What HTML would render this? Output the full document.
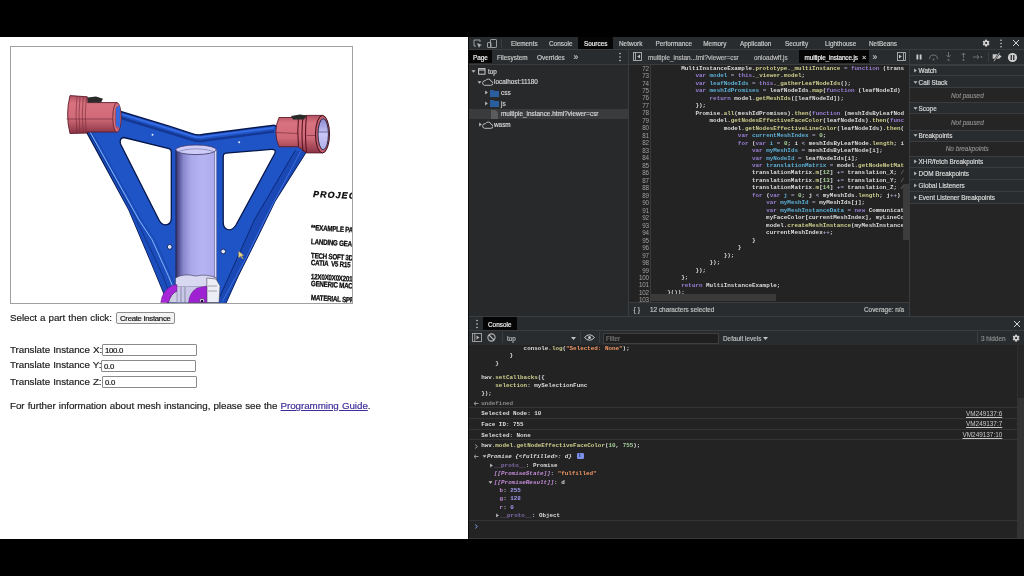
<!DOCTYPE html>
<html><head><meta charset="utf-8">
<style>
*{box-sizing:border-box;margin:0;padding:0}
html,body{width:1024px;height:576px;overflow:hidden;background:#000;font-family:"Liberation Sans",sans-serif}
.b{position:absolute}
.t{position:absolute;white-space:pre;line-height:1}
.d{-webkit-text-stroke:0.18px currentColor}
.m{position:absolute;white-space:pre;line-height:1;font-family:"Liberation Mono",monospace;font-weight:bold}
svg{position:absolute}
</style></head><body><div style="position:absolute;left:0;top:0;width:1024px;height:576px;will-change:transform;background:#000">
<div class="b" style="left:0;top:37px;width:468px;height:502px;background:#fff"></div><div class="b" style="left:10px;top:46px;width:343px;height:258px;border:1px solid #a0a0a0;background:#fff"></div><svg style="left:11px;top:47px" width="341" height="256" viewBox="11 47 341 256">
<defs>
<linearGradient id="cyl" x1="175.5" x2="214" y1="0" y2="0" gradientUnits="userSpaceOnUse">
<stop offset="0" stop-color="#22204a"/><stop offset="0.06" stop-color="#4a4888"/><stop offset="0.2" stop-color="#8886cc"/><stop offset="0.4" stop-color="#aaa8ea"/><stop offset="0.7" stop-color="#b6b4f2"/><stop offset="1" stop-color="#adabec"/>
</linearGradient>
<linearGradient id="red" x1="0" x2="0" y1="0" y2="1">
<stop offset="0" stop-color="#b45262"/><stop offset="0.2" stop-color="#d8727f"/><stop offset="0.6" stop-color="#d06a78"/><stop offset="1" stop-color="#8a3444"/>
</linearGradient>
<linearGradient id="lav" x1="0" x2="0" y1="0" y2="1">
<stop offset="0" stop-color="#8c8ad0"/><stop offset="0.5" stop-color="#c8c6f6"/><stop offset="1" stop-color="#b0aeea"/>
</linearGradient>
</defs>
<!-- frame outer -->
<path d="M86 131 L100 119 L116 110 L170 126.4 L192 133.6 Q198 135.8 204 134.2 L274 125.2 L292 132 L305.7 152.5 L275.5 200 L257 238 L238 276 L225.8 303 L168 303 L150.2 260 L129 210 Z" fill="#1f54c6" stroke="#08184e" stroke-width="1.4"/>
<!-- upper bar stripes -->
<path d="M116 116.5 L170 133 L191 139.5 Q198 142 205 140.5 L274 131.5" fill="none" stroke="#143894" stroke-width="2.4"/>
<path d="M116 112.6 L170 129 L192 136.1 Q198 138.1 204 136.7 L274 127.7" fill="none" stroke="#3a6ee6" stroke-width="1.6"/>
<!-- left arm band -->
<path d="M87 131 L129 210 L150.2 260 L168 303 L178 303 L168.6 276.5 L152.2 240 L139 220 L89.5 131 Z" fill="#1b4dbd"/>
<path d="M88.2 131 L134 215 L151 250 L163 276 L173 303" fill="none" stroke="#103082" stroke-width="0.8"/>
<path d="M89.5 131 L139 220 L152.2 240 L168.6 276.5 L177 297" fill="none" stroke="#8ec0ff" stroke-width="0.9"/>
<path d="M92 131.5 L141 219 L154.5 239 L171 276 L176 288" fill="none" stroke="#163e9e" stroke-width="0.7"/>
<!-- right arm band -->
<path d="M305.7 152.5 L275.5 200 L257 238 L238 276 L225.8 303 L217 303 L254.3 220 L295.3 150.4 Z" fill="#1a48b4"/>
<path d="M300.5 151.5 L264.5 220 L246 258 L221.5 303" fill="none" stroke="#4c7ef0" stroke-width="0.7"/>
<path d="M295.3 150.4 L254.3 220 L217 303" fill="none" stroke="#0e2a7a" stroke-width="1"/>
<!-- holes -->
<path d="M124 137.5 L169 148.7 Q171.3 149.3 171.3 152 L171.3 218 Q171.3 224.8 165.3 224.8 Q161.5 224.8 159 220 L120.5 144 Q119 138 124 137.5 Z" fill="#fff" stroke="#07164a" stroke-width="1.3"/>
<path d="M226 153.2 L271 149.4 Q277 149 274.5 154 L236 225 Q232 231 227.5 229.5 Q223.2 228 223.2 222 L223.2 157 Q223.2 153.5 226 153.2 Z" fill="#fff" stroke="#07164a" stroke-width="1.3"/>
<!-- central cylinder -->
<rect x="175.5" y="150" width="38.8" height="128" fill="url(#cyl)"/>
<rect x="214.3" y="150" width="2.4" height="128" fill="#dcdcf8" stroke="#40406a" stroke-width="0.4"/>
<ellipse cx="196" cy="149.8" rx="20.2" ry="4.8" fill="#cfcdf8" stroke="#3a3868" stroke-width="0.8"/>
<path d="M178 151.5 Q196 146 214 151.5" fill="none" stroke="#6e6ca0" stroke-width="0.6"/>
<!-- bottom fittings -->
<path d="M175.5 278 Q183 273 196 276 Q207 273.5 216.7 278 L216.7 287 L175.5 287 Z" fill="#d9d8f2" stroke="#3a3a5a" stroke-width="0.6"/>
<path d="M176.5 287 L206.8 287 L206.8 302.6 L176.5 302.6 Z" fill="#c9c8e8"/>
<path d="M181 287 L181 302.6 M185 287 L185 302.6" stroke="#4a4a6a" stroke-width="0.5"/>
<path d="M206.8 278 L216 279 L220 286 L219 302.6 L206.8 302.6 Z" fill="#ededf5" stroke="#4a4a60" stroke-width="0.6"/>
<path d="M208 286 L217 286 M208 291 L217 291" stroke="#5a5a70" stroke-width="0.5"/>
<path d="M168.5 302.6 Q170.5 294 177 291 L177 302.6 Z" fill="#cfcfe4" stroke="#4a4a6a" stroke-width="0.4"/>
<path d="M160.7 302.6 Q162 291 172 285.5 L177 284.5 L177 291 Q170.5 294 168.5 302.6 Z" fill="#a626d8" stroke="#4a1060" stroke-width="0.4"/>
<path d="M188.6 302.6 Q189 293 197 288 L206.8 286 L206.8 302.6 Z" fill="#9f22d2" stroke="#4a1060" stroke-width="0.4"/>
<ellipse cx="202" cy="300.5" rx="2.6" ry="2.2" fill="#e6d6f6" stroke="#300848" stroke-width=".6"/>
<circle cx="202" cy="301" r="1.2" fill="#200030"/>
<!-- small holes dots -->
<circle cx="152.5" cy="134.7" r="1" fill="#e8eeff"/>
<circle cx="239.2" cy="142.2" r="1" fill="#e8eeff"/>
<circle cx="169.7" cy="246.9" r="2.4" fill="#dfe4fa" stroke="#0c1f58" stroke-width=".9"/>
<circle cx="223.2" cy="251.5" r="2.4" fill="#dfe4fa" stroke="#0c1f58" stroke-width=".9"/>
<!-- left cylinder -->
<path d="M70 95.6 L87.3 96.8 L87.3 102.6 L117 102.6 L117 132 L87.3 132 L87.3 133 L70 133.5 Q65.2 114.5 70 95.6 Z" fill="url(#red)" stroke="#5e1a2a" stroke-width="0.9"/>
<ellipse cx="117" cy="117.4" rx="4.2" ry="14.8" fill="#d27282" stroke="#5e1a2a" stroke-width="0.8"/>
<ellipse cx="117.6" cy="117.4" rx="2.4" ry="11.5" fill="#c45a6a" stroke="#7a2a3a" stroke-width="0.5"/>
<path d="M116 108 L120 105 L120 128 L116 126 Z" fill="#3468dc"/>
<path d="M77 96 Q75 114.5 77 133.2 M80 96.2 Q78 114.5 80 133.3 M83.3 96.4 Q81.3 114.5 83.3 133.4 M86.3 96.7 Q84.3 114.5 86.3 133.4" fill="none" stroke="#6a2232" stroke-width="0.55"/>
<path d="M66.5 119 L113 119" stroke="#6a2232" stroke-width="0.6"/>
<path d="M87.5 97.6 L96 96.6 L103 98.8 L101 102.6 L88 102.6 Z" fill="#2a2a2a"/>
<!-- right cylinder -->
<path d="M279 117.5 L298.3 117.5 L306.7 115.4 L322.5 115.4 L322.5 152.9 L306.7 152.9 L298.3 146.7 L279 146.7 Q272.6 132 279 117.5 Z" fill="url(#red)" stroke="#5e1a2a" stroke-width="0.9"/>
<path d="M298.5 118 Q297 132 298.5 146.5 M303 116.5 Q301 134 303 151.5 M306.5 115.8 Q304.5 134 306.5 152.5" fill="none" stroke="#5a1424" stroke-width="1.1"/>
<path d="M275 132.5 L298 133.5 M306.7 135.5 L318 135.5" stroke="#6a2232" stroke-width="0.6"/>
<ellipse cx="322.5" cy="134.2" rx="7" ry="18.8" fill="#c85f6f" stroke="#3a0c18" stroke-width="1"/>
<ellipse cx="323.2" cy="134.2" rx="5.2" ry="15.6" fill="url(#lav)" stroke="#20203a" stroke-width="0.9"/>
<path d="M318.5 132 L327.5 132" stroke="#3a3a70" stroke-width="0.6"/>
<path d="M291 116 L300 114.5 L306.7 115.6 L304 119.6 L293 119.6 Z" fill="#2a2a2a"/>
<!-- cursor -->
<path d="M238.5 251 L238.5 258 L240.5 256.5 L242.5 259 L243.5 258.5 L241.5 256 L244 255.5 Z" fill="#e8d080" stroke="#555" stroke-width=".3"/>
</svg><div class="b" style="left:300px;top:180px;width:52.3px;height:122.6px;overflow:hidden"><div class="t" style="left:13px;top:10.2px;font-size:8.8px;font-weight:bold;font-style:italic;letter-spacing:1.2px;color:#0a0a0a;-webkit-text-stroke:0.3px #000;transform:rotate(2.5deg);transform-origin:0 50%">PROJEC</div><div class="t" style="left:11px;top:44.29999999999998px;font-size:7.6px;font-weight:bold;letter-spacing:-0.3px;color:#0a0a0a;-webkit-text-stroke:0.25px #000;transform:rotate(3.5deg) scaleX(0.82);transform-origin:0 50%">**EXAMPLE PART</div><div class="t" style="left:11px;top:58.29999999999998px;font-size:7.6px;font-weight:bold;letter-spacing:-0.3px;color:#0a0a0a;-webkit-text-stroke:0.25px #000;transform:rotate(3.5deg) scaleX(0.82);transform-origin:0 50%">LANDING GEAR</div><div class="t" style="left:11px;top:72.0px;font-size:7.6px;font-weight:bold;letter-spacing:-0.3px;color:#0a0a0a;-webkit-text-stroke:0.25px #000;transform:rotate(3.5deg) scaleX(0.82);transform-origin:0 50%">TECH SOFT 3D</div><div class="t" style="left:11px;top:79.19999999999999px;font-size:7.6px;font-weight:bold;letter-spacing:-0.3px;color:#0a0a0a;-webkit-text-stroke:0.25px #000;transform:rotate(3.5deg) scaleX(0.82);transform-origin:0 50%">CATIA  V5 R15</div><div class="t" style="left:11px;top:93.0px;font-size:7.6px;font-weight:bold;letter-spacing:-0.3px;color:#0a0a0a;-webkit-text-stroke:0.25px #000;transform:rotate(3.5deg) scaleX(0.82);transform-origin:0 50%">12X0X0X0X2015</div><div class="t" style="left:11px;top:100.39999999999998px;font-size:7.6px;font-weight:bold;letter-spacing:-0.3px;color:#0a0a0a;-webkit-text-stroke:0.25px #000;transform:rotate(3.5deg) scaleX(0.82);transform-origin:0 50%">GENERIC MACHINE</div><div class="t" style="left:11px;top:113.89999999999998px;font-size:7.6px;font-weight:bold;letter-spacing:-0.3px;color:#0a0a0a;-webkit-text-stroke:0.25px #000;transform:rotate(3.5deg) scaleX(0.82);transform-origin:0 50%">MATERIAL SPF</div></div><div class="t d" style="left:10px;top:313px;font-size:9.8px;color:#202020;letter-spacing:-0.05px;word-spacing:0.45px">Select a part then click:</div><div class="b" style="left:116px;top:312px;width:59px;height:12px;border:1px solid #8d8d8d;border-radius:2px;background:#f3f3f3"></div><div class="t d" style="left:120px;top:314.5px;font-size:7.8px;color:#111;letter-spacing:-0.3px">Create Instance</div><div class="t d" style="left:10px;top:345px;font-size:9.8px;color:#202020;letter-spacing:-0.05px;word-spacing:0.45px">Translate Instance X:</div><div class="t d" style="left:10px;top:360px;font-size:9.8px;color:#202020;letter-spacing:-0.05px;word-spacing:0.45px">Translate Instance Y:</div><div class="t d" style="left:10px;top:376.7px;font-size:9.8px;color:#202020;letter-spacing:-0.05px;word-spacing:0.45px">Translate Instance Z:</div><div class="b" style="left:102px;top:344px;width:95px;height:12px;border:1px solid #8a8a8a;border-radius:1px;background:#fff"></div><div class="t d" style="left:105px;top:346.5px;font-size:7.8px;color:#111;letter-spacing:-0.3px">100.0</div><div class="b" style="left:101px;top:360.2px;width:95px;height:12px;border:1px solid #8a8a8a;border-radius:1px;background:#fff"></div><div class="t d" style="left:104px;top:362.7px;font-size:7.8px;color:#111;letter-spacing:-0.3px">0.0</div><div class="b" style="left:102px;top:376px;width:95px;height:12px;border:1px solid #8a8a8a;border-radius:1px;background:#fff"></div><div class="t d" style="left:105px;top:378.5px;font-size:7.8px;color:#111;letter-spacing:-0.3px">0.0</div><div class="t d" style="left:10px;top:401px;font-size:9.8px;color:#202020;letter-spacing:-0.05px;word-spacing:0.45px">For further information about mesh instancing, please see the <span style="color:#3d2f98;text-decoration:underline">Programming Guide</span>.</div><div class="b" style="left:468px;top:37px;width:556px;height:502px;background:#27292b;"></div><div class="b" style="left:468px;top:37px;width:556px;height:12px;background:#292c2e;"></div><div class="b" style="left:468px;top:49px;width:556px;height:1px;background:#3b3c3e;"></div><svg style="left:473px;top:39px" width="10" height="9" viewBox="0 0 10 9"><path d="M1 1h6v2M1 1v6h2" fill="none" stroke="#a9a9a9" stroke-width="0.9"/><path d="M4 4l5 2-2 .8L6 9z" fill="#b5b5b5"/></svg><svg style="left:487px;top:39px" width="10" height="9" viewBox="0 0 10 9"><rect x="3.5" y="0.5" width="6" height="8" rx=".6" fill="none" stroke="#a9a9a9" stroke-width="0.9"/><rect x="0.5" y="3.5" width="3.5" height="5" rx=".5" fill="none" stroke="#a9a9a9" stroke-width="0.9"/></svg><div class="b" style="left:501px;top:39px;width:1px;height:9px;background:#3b3c3e;"></div><div class="b" style="left:578px;top:37px;width:35px;height:12px;background:#050505;"></div><div class="t d" style="left:511px;top:40.7px;font-size:6.4px;color:#c8c8c8;">Elements</div><div class="t d" style="left:549px;top:40.7px;font-size:6.4px;color:#c8c8c8;">Console</div><div class="t d" style="left:584px;top:40.7px;font-size:6.4px;color:#f0f0f0;">Sources</div><div class="t d" style="left:619px;top:40.7px;font-size:6.4px;color:#c8c8c8;">Network</div><div class="t d" style="left:655.5px;top:40.7px;font-size:6.4px;color:#c8c8c8;">Performance</div><div class="t d" style="left:703.3px;top:40.7px;font-size:6.4px;color:#c8c8c8;">Memory</div><div class="t d" style="left:740px;top:40.7px;font-size:6.4px;color:#c8c8c8;">Application</div><div class="t d" style="left:785px;top:40.7px;font-size:6.4px;color:#c8c8c8;">Security</div><div class="t d" style="left:825px;top:40.7px;font-size:6.4px;color:#c8c8c8;">Lighthouse</div><div class="t d" style="left:869px;top:40.7px;font-size:6.4px;color:#c8c8c8;">NetBeans</div><svg style="left:982px;top:38.8px" width="8.2" height="8.2" viewBox="0 0 10 10"><circle cx="5.00" cy="1.90" r="1.35" fill="#cfcfcf"/><circle cx="7.68" cy="3.45" r="1.35" fill="#cfcfcf"/><circle cx="7.68" cy="6.55" r="1.35" fill="#cfcfcf"/><circle cx="5.00" cy="8.10" r="1.35" fill="#cfcfcf"/><circle cx="2.32" cy="6.55" r="1.35" fill="#cfcfcf"/><circle cx="2.32" cy="3.45" r="1.35" fill="#cfcfcf"/><circle cx="5" cy="5" r="3.1" fill="#cfcfcf"/><circle cx="5" cy="5" r="1.2" fill="#111"/></svg><svg style="left:999px;top:39px" width="4" height="9" viewBox="0 0 4 9"><circle cx="2" cy="1.3" r=".8" fill="#cfcfcf"/><circle cx="2" cy="4.5" r=".8" fill="#cfcfcf"/><circle cx="2" cy="7.7" r=".8" fill="#cfcfcf"/></svg><svg style="left:1012px;top:39px" width="8" height="8" viewBox="0 0 8 8"><path d="M1 1L7 7M7 1L1 7" stroke="#d5d5d5" stroke-width="1"/></svg><div class="b" style="left:468px;top:50px;width:556px;height:14px;background:#292c2e;"></div><div class="b" style="left:468px;top:64px;width:556px;height:1px;background:#3b3c3e;"></div><div class="b" style="left:469px;top:50px;width:23px;height:13px;background:#050505;"></div><div class="t d" style="left:473px;top:55px;font-size:6.4px;color:#f0f0f0;">Page</div><div class="t d" style="left:497px;top:55px;font-size:6.4px;color:#c8c8c8;">Filesystem</div><div class="t d" style="left:537px;top:55px;font-size:6.4px;color:#c8c8c8;">Overrides</div><div class="t d" style="left:573.5px;top:53px;font-size:8.5px;color:#c8c8c8;">»</div><svg style="left:618px;top:52px" width="4" height="10" viewBox="0 0 4 10"><circle cx="2" cy="1.5" r=".8" fill="#cfcfcf"/><circle cx="2" cy="5" r=".8" fill="#cfcfcf"/><circle cx="2" cy="8.5" r=".8" fill="#cfcfcf"/></svg><div class="b" style="left:628px;top:50px;width:1px;height:266px;background:#3b3c3e;"></div><svg style="left:633px;top:52px" width="9" height="9" viewBox="0 0 9 9"><rect x=".5" y=".5" width="8" height="8" fill="none" stroke="#b0b0b0" stroke-width=".9"/><path d="M2.5 1v7" stroke="#b0b0b0" stroke-width=".9"/><path d="M7 2.5L4.2 4.5 7 6.5z" fill="#c0c0c0"/></svg><div class="t d" style="left:648px;top:55px;font-size:6.4px;color:#bdbdbd;">multiple_instan...tml?viewer=csr</div><div class="t d" style="left:754px;top:55px;font-size:6.4px;color:#bdbdbd;">onloadwff.js</div><div class="b" style="left:799px;top:50px;width:70px;height:13px;background:#050505;"></div><div class="t d" style="left:804.5px;top:55px;font-size:6.4px;color:#f2f2f2;letter-spacing:-0.12px">multiple_instance.js</div><div class="t d" style="left:862px;top:54px;font-size:7.5px;color:#cfcfcf;">×</div><div class="t d" style="left:872.5px;top:53px;font-size:8.5px;color:#c8c8c8;">»</div><svg style="left:897px;top:52px" width="9" height="9" viewBox="0 0 9 9"><rect x=".5" y=".5" width="8" height="8" fill="none" stroke="#b0b0b0" stroke-width=".9"/><path d="M6.5 1v7" stroke="#b0b0b0" stroke-width=".9"/><path d="M2 2.5L4.8 4.5 2 6.5z" fill="#c0c0c0"/></svg><div class="b" style="left:909px;top:50px;width:1px;height:266px;background:#3b3c3e;"></div><div class="b" style="left:468px;top:108.5px;width:160px;height:10.5px;background:#3a3b3d;"></div><svg style="left:470.5px;top:69px" width="5" height="5" viewBox="0 0 5 5"><path d="M.5 1.2h4L2.5 3.8z" fill="#bdbdbd"/></svg><svg style="left:477.8px;top:68px" width="8" height="7" viewBox="0 0 8 7"><rect x=".6" y=".6" width="6.4" height="5.6" fill="none" stroke="#c8c8c8" stroke-width="1"/><path d="M.6 2h6.4" stroke="#c8c8c8" stroke-width="1.1"/></svg><div class="t d" style="left:488px;top:68.8px;font-size:6.4px;color:#d5d5d5;">top</div><svg style="left:476.5px;top:79.5px" width="5" height="5" viewBox="0 0 5 5"><path d="M.5 1.2h4L2.5 3.8z" fill="#bdbdbd"/></svg><svg style="left:482px;top:77.5px" width="11" height="8" viewBox="0 0 11 8"><path d="M2.5 7.3h6.3a2 2 0 0 0 .3-4 3 3 0 0 0-5.6-.6A2.3 2.3 0 0 0 2.5 7.3z" fill="none" stroke="#c8c8c8" stroke-width=".9"/></svg><div class="t d" style="left:494px;top:79px;font-size:6.4px;color:#d5d5d5;">localhost:11180</div><svg style="left:483.5px;top:90px" width="5" height="5" viewBox="0 0 5 5"><path d="M1.2 .5v4L3.8 2.5z" fill="#bdbdbd"/></svg><svg style="left:490px;top:88.5px" width="9" height="8" viewBox="0 0 9 8"><path d="M0 1h3.5l1 1H9v6H0z" fill="#2a5e9e"/></svg><div class="t d" style="left:501px;top:90px;font-size:6.4px;color:#d5d5d5;">css</div><svg style="left:483.5px;top:100.5px" width="5" height="5" viewBox="0 0 5 5"><path d="M1.2 .5v4L3.8 2.5z" fill="#bdbdbd"/></svg><svg style="left:490px;top:99px" width="9" height="8" viewBox="0 0 9 8"><path d="M0 1h3.5l1 1H9v6H0z" fill="#2a5e9e"/></svg><div class="t d" style="left:501px;top:100.8px;font-size:6.4px;color:#d5d5d5;">js</div><svg style="left:491px;top:109.5px" width="7" height="9" viewBox="0 0 7 9"><path d="M0 0h4.5L7 2.5V9H0z" fill="#5b5b5b"/></svg><div class="t d" style="left:501px;top:111.3px;font-size:6.4px;color:#d5d5d5;">multiple_instance.html?viewer=csr</div><svg style="left:477.5px;top:122px" width="5" height="5" viewBox="0 0 5 5"><path d="M1.2 .5v4L3.8 2.5z" fill="#bdbdbd"/></svg><svg style="left:482px;top:120.5px" width="11" height="8" viewBox="0 0 11 8"><path d="M2.5 7.3h6.3a2 2 0 0 0 .3-4 3 3 0 0 0-5.6-.6A2.3 2.3 0 0 0 2.5 7.3z" fill="none" stroke="#c8c8c8" stroke-width=".9"/></svg><div class="t d" style="left:494px;top:122px;font-size:6.4px;color:#d5d5d5;">wasm</div><div class="b" style="left:629px;top:65px;width:280px;height:238px;background:#232323;"></div><div class="b" style="left:650px;top:65px;width:1px;height:238px;background:#3a3a3a;"></div><div class="b" style="left:651px;top:64px;width:252.5px;height:236px;overflow:hidden"><div class="m" style="left:2px;top:1.75px;font-size:5.900px;color:#dcdcdc">        MultiInstanceExample.<span style="color:#cfcf8e">prototype</span>.<span style="color:#cfcf8e">_multiInstance</span> <span style="color:#a8a2c8">=</span> <span style="color:#9a7fd5">function</span> (translation_X, translation_Y, translation_Z) {</div><div class="m" style="left:2px;top:9.23px;font-size:5.900px;color:#dcdcdc">            <span style="color:#9a7fd5">var</span> <span style="color:#5db0d7">model</span> <span style="color:#a8a2c8">=</span> <span style="color:#9a7fd5">this</span>.<span style="color:#cfcf8e">_viewer</span>.<span style="color:#cfcf8e">model</span>;</div><div class="m" style="left:2px;top:16.71px;font-size:5.900px;color:#dcdcdc">            <span style="color:#9a7fd5">var</span> <span style="color:#5db0d7">leafNodeIds</span> <span style="color:#a8a2c8">=</span> <span style="color:#9a7fd5">this</span>.<span style="color:#cfcf8e">_gatherLeafNodeIds</span>();</div><div class="m" style="left:2px;top:24.19px;font-size:5.900px;color:#dcdcdc">            <span style="color:#9a7fd5">var</span> <span style="color:#5db0d7">meshIdPromises</span> <span style="color:#a8a2c8">=</span> leafNodeIds.<span style="color:#cfcf8e">map</span>(<span style="color:#9a7fd5">function</span> (leafNodeId) {</div><div class="m" style="left:2px;top:31.67px;font-size:5.900px;color:#dcdcdc">                <span style="color:#9a7fd5">return</span> model.<span style="color:#cfcf8e">getMeshIds</span>([leafNodeId]);</div><div class="m" style="left:2px;top:39.15px;font-size:5.900px;color:#dcdcdc">            });</div><div class="m" style="left:2px;top:46.63px;font-size:5.900px;color:#dcdcdc">            Promise.<span style="color:#cfcf8e">all</span>(meshIdPromises).<span style="color:#cfcf8e">then</span>(<span style="color:#9a7fd5">function</span> (meshIdsByLeafNode) {</div><div class="m" style="left:2px;top:54.11px;font-size:5.900px;color:#dcdcdc">                model.<span style="color:#cfcf8e">getNodesEffectiveFaceColor</span>(leafNodeIds).<span style="color:#cfcf8e">then</span>(<span style="color:#9a7fd5">function</span> (myFaceColor) {</div><div class="m" style="left:2px;top:61.59px;font-size:5.900px;color:#dcdcdc">                    model.<span style="color:#cfcf8e">getNodesEffectiveLineColor</span>(leafNodeIds).<span style="color:#cfcf8e">then</span>(<span style="color:#9a7fd5">function</span> (myLineColor) {</div><div class="m" style="left:2px;top:69.07px;font-size:5.900px;color:#dcdcdc">                        <span style="color:#9a7fd5">var</span> <span style="color:#5db0d7">currentMeshIndex</span> <span style="color:#a8a2c8">=</span> <span style="color:#a9d39b">0</span>;</div><div class="m" style="left:2px;top:76.55px;font-size:5.900px;color:#dcdcdc">                        <span style="color:#9a7fd5">for</span> (<span style="color:#9a7fd5">var</span> <span style="color:#5db0d7">i</span> <span style="color:#a8a2c8">=</span> <span style="color:#a9d39b">0</span>; i <span style="color:#a8a2c8">&lt;</span> meshIdsByLeafNode.<span style="color:#cfcf8e">length</span>; i<span style="color:#a8a2c8">++</span>) {</div><div class="m" style="left:2px;top:84.03px;font-size:5.900px;color:#dcdcdc">                            <span style="color:#9a7fd5">var</span> <span style="color:#5db0d7">myMeshIds</span> <span style="color:#a8a2c8">=</span> meshIdsByLeafNode[i];</div><div class="m" style="left:2px;top:91.51px;font-size:5.900px;color:#dcdcdc">                            <span style="color:#9a7fd5">var</span> <span style="color:#5db0d7">myNodeId</span> <span style="color:#a8a2c8">=</span> leafNodeIds[i];</div><div class="m" style="left:2px;top:98.99px;font-size:5.900px;color:#dcdcdc">                            <span style="color:#9a7fd5">var</span> <span style="color:#5db0d7">translationMatrix</span> <span style="color:#a8a2c8">=</span> model.<span style="color:#cfcf8e">getNodeNetMatrix</span>(myNodeId);</div><div class="m" style="left:2px;top:106.47px;font-size:5.900px;color:#dcdcdc">                            translationMatrix.<span style="color:#cfcf8e">m</span>[<span style="color:#a9d39b">12</span>] <span style="color:#a8a2c8">+=</span> translation_X; <span style="color:#777">/</span><span style="color:#777">/</span></div><div class="m" style="left:2px;top:113.95px;font-size:5.900px;color:#dcdcdc">                            translationMatrix.<span style="color:#cfcf8e">m</span>[<span style="color:#a9d39b">13</span>] <span style="color:#a8a2c8">+=</span> translation_Y; <span style="color:#777">/</span><span style="color:#777">/</span></div><div class="m" style="left:2px;top:121.43px;font-size:5.900px;color:#dcdcdc">                            translationMatrix.<span style="color:#cfcf8e">m</span>[<span style="color:#a9d39b">14</span>] <span style="color:#a8a2c8">+=</span> translation_Z; <span style="color:#777">/</span><span style="color:#777">/</span></div><div class="m" style="left:2px;top:128.91px;font-size:5.900px;color:#dcdcdc">                            <span style="color:#9a7fd5">for</span> (<span style="color:#9a7fd5">var</span> <span style="color:#5db0d7">j</span> <span style="color:#a8a2c8">=</span> <span style="color:#a9d39b">0</span>; j <span style="color:#a8a2c8">&lt;</span> myMeshIds.<span style="color:#cfcf8e">length</span>; j<span style="color:#a8a2c8">++</span>) {</div><div class="m" style="left:2px;top:136.39px;font-size:5.900px;color:#dcdcdc">                                <span style="color:#9a7fd5">var</span> <span style="color:#5db0d7">myMeshId</span> <span style="color:#a8a2c8">=</span> myMeshIds[j];</div><div class="m" style="left:2px;top:143.87px;font-size:5.900px;color:#dcdcdc">                                <span style="color:#9a7fd5">var</span> <span style="color:#5db0d7">myMeshInstanceData</span> <span style="color:#a8a2c8">=</span> <span style="color:#9a7fd5">new</span> Communicator.<span style="color:#cfcf8e">MeshInstanceData</span>(myMeshId,</div><div class="m" style="left:2px;top:151.35px;font-size:5.900px;color:#dcdcdc">                                myFaceColor[currentMeshIndex], myLineColor[currentMeshIndex]);</div><div class="m" style="left:2px;top:158.83px;font-size:5.900px;color:#dcdcdc">                                model.<span style="color:#cfcf8e">createMeshInstance</span>(myMeshInstanceData, null, null, true);</div><div class="m" style="left:2px;top:166.31px;font-size:5.900px;color:#dcdcdc">                                currentMeshIndex<span style="color:#a8a2c8">++</span>;</div><div class="m" style="left:2px;top:173.79px;font-size:5.900px;color:#dcdcdc">                            }</div><div class="m" style="left:2px;top:181.27px;font-size:5.900px;color:#dcdcdc">                        }</div><div class="m" style="left:2px;top:188.75px;font-size:5.900px;color:#dcdcdc">                    });</div><div class="m" style="left:2px;top:196.23px;font-size:5.900px;color:#dcdcdc">                });</div><div class="m" style="left:2px;top:203.71px;font-size:5.900px;color:#dcdcdc">            });</div><div class="m" style="left:2px;top:211.19px;font-size:5.900px;color:#dcdcdc">        };</div><div class="m" style="left:2px;top:218.67px;font-size:5.900px;color:#dcdcdc">        <span style="color:#9a7fd5">return</span> MultiInstanceExample;</div><div class="m" style="left:2px;top:226.15px;font-size:5.900px;color:#dcdcdc">    }());</div><div class="m" style="left:2px;top:233.63px;font-size:5.900px;color:#dcdcdc"></div></div><div class="t" style="left:642.30px;top:65.55px;font-size:6.3px;color:#a0a0a0;letter-spacing:-0.3px">72</div><div class="t" style="left:642.30px;top:73.03px;font-size:6.3px;color:#a0a0a0;letter-spacing:-0.3px">73</div><div class="t" style="left:642.30px;top:80.51px;font-size:6.3px;color:#a0a0a0;letter-spacing:-0.3px">74</div><div class="t" style="left:642.30px;top:87.99px;font-size:6.3px;color:#a0a0a0;letter-spacing:-0.3px">75</div><div class="t" style="left:642.30px;top:95.47px;font-size:6.3px;color:#a0a0a0;letter-spacing:-0.3px">76</div><div class="t" style="left:642.30px;top:102.95px;font-size:6.3px;color:#a0a0a0;letter-spacing:-0.3px">77</div><div class="t" style="left:642.30px;top:110.43px;font-size:6.3px;color:#a0a0a0;letter-spacing:-0.3px">78</div><div class="t" style="left:642.30px;top:117.91px;font-size:6.3px;color:#a0a0a0;letter-spacing:-0.3px">79</div><div class="t" style="left:642.30px;top:125.39px;font-size:6.3px;color:#a0a0a0;letter-spacing:-0.3px">80</div><div class="t" style="left:642.30px;top:132.87px;font-size:6.3px;color:#a0a0a0;letter-spacing:-0.3px">81</div><div class="t" style="left:642.30px;top:140.35px;font-size:6.3px;color:#a0a0a0;letter-spacing:-0.3px">82</div><div class="t" style="left:642.30px;top:147.83px;font-size:6.3px;color:#a0a0a0;letter-spacing:-0.3px">83</div><div class="t" style="left:642.30px;top:155.31px;font-size:6.3px;color:#a0a0a0;letter-spacing:-0.3px">84</div><div class="t" style="left:642.30px;top:162.79px;font-size:6.3px;color:#a0a0a0;letter-spacing:-0.3px">85</div><div class="t" style="left:642.30px;top:170.27px;font-size:6.3px;color:#a0a0a0;letter-spacing:-0.3px">86</div><div class="t" style="left:642.30px;top:177.75px;font-size:6.3px;color:#a0a0a0;letter-spacing:-0.3px">87</div><div class="t" style="left:642.30px;top:185.23px;font-size:6.3px;color:#a0a0a0;letter-spacing:-0.3px">88</div><div class="t" style="left:642.30px;top:192.71px;font-size:6.3px;color:#a0a0a0;letter-spacing:-0.3px">89</div><div class="t" style="left:642.30px;top:200.19px;font-size:6.3px;color:#a0a0a0;letter-spacing:-0.3px">90</div><div class="t" style="left:642.30px;top:207.67px;font-size:6.3px;color:#a0a0a0;letter-spacing:-0.3px">91</div><div class="t" style="left:642.30px;top:215.15px;font-size:6.3px;color:#a0a0a0;letter-spacing:-0.3px">92</div><div class="t" style="left:642.30px;top:222.63px;font-size:6.3px;color:#a0a0a0;letter-spacing:-0.3px">93</div><div class="t" style="left:642.30px;top:230.11px;font-size:6.3px;color:#a0a0a0;letter-spacing:-0.3px">94</div><div class="t" style="left:642.30px;top:237.59px;font-size:6.3px;color:#a0a0a0;letter-spacing:-0.3px">95</div><div class="t" style="left:642.30px;top:245.07px;font-size:6.3px;color:#a0a0a0;letter-spacing:-0.3px">96</div><div class="t" style="left:642.30px;top:252.55px;font-size:6.3px;color:#a0a0a0;letter-spacing:-0.3px">97</div><div class="t" style="left:642.30px;top:260.03px;font-size:6.3px;color:#a0a0a0;letter-spacing:-0.3px">98</div><div class="t" style="left:642.30px;top:267.51px;font-size:6.3px;color:#a0a0a0;letter-spacing:-0.3px">99</div><div class="t" style="left:639.05px;top:274.99px;font-size:6.3px;color:#a0a0a0;letter-spacing:-0.3px">100</div><div class="t" style="left:639.05px;top:282.47px;font-size:6.3px;color:#a0a0a0;letter-spacing:-0.3px">101</div><div class="t" style="left:639.05px;top:289.95px;font-size:6.3px;color:#a0a0a0;letter-spacing:-0.3px">102</div><div class="t" style="left:639.05px;top:297.43px;font-size:6.3px;color:#a0a0a0;letter-spacing:-0.3px">103</div><div class="b" style="left:903px;top:184px;width:6px;height:56px;background:#3c3c3c;"></div><div class="b" style="left:651px;top:294px;width:125px;height:7.2px;background:#3a3a3a;"></div><div class="b" style="left:629px;top:302px;width:280px;height:1px;background:#3b3c3e;"></div><div class="b" style="left:629px;top:303px;width:280px;height:13px;background:#292c2e;"></div><div class="t d" style="left:633.5px;top:306.3px;font-size:7px;color:#bdbdbd;">{ }</div><div class="t d" style="left:650px;top:307.2px;font-size:6.4px;color:#c0c0c0;">12 characters selected</div><div class="t d" style="left:864px;top:307.2px;font-size:6.4px;color:#c0c0c0;">Coverage: n/a</div><div class="b" style="left:910px;top:65px;width:114px;height:251px;background:#252526;"></div><svg style="left:915px;top:53px" width="8" height="8" viewBox="0 0 8 8"><rect x="1.5" y="1.5" width="1.8" height="5" fill="#d0d0d0"/><rect x="4.7" y="1.5" width="1.8" height="5" fill="#d0d0d0"/></svg><svg style="left:928px;top:53px" width="11" height="8" viewBox="0 0 11 8"><path d="M1.5 6A4 4 0 0 1 9.5 6" fill="none" stroke="#6e6e6e" stroke-width="1.1"/><circle cx="5.5" cy="6.6" r="1" fill="#6e6e6e"/></svg><svg style="left:945px;top:52px" width="7" height="10" viewBox="0 0 7 10"><path d="M3.5 0v5M1.5 3.2l2 2 2-2" fill="none" stroke="#6e6e6e" stroke-width="1"/><circle cx="3.5" cy="8" r="1" fill="#6e6e6e"/></svg><svg style="left:960px;top:52px" width="7" height="10" viewBox="0 0 7 10"><path d="M3.5 6V1M1.5 3l2-2 2 2" fill="none" stroke="#6e6e6e" stroke-width="1"/><circle cx="3.5" cy="8" r="1" fill="#6e6e6e"/></svg><svg style="left:973px;top:54px" width="10" height="6" viewBox="0 0 10 6"><path d="M0 3h6M4 1l2 2-2 2" fill="none" stroke="#6e6e6e" stroke-width="1"/><circle cx="8.5" cy="3" r="1" fill="#6e6e6e"/></svg><div class="b" style="left:988px;top:52px;width:1px;height:10px;background:#3b3c3e;"></div><svg style="left:992px;top:52px" width="11" height="10" viewBox="0 0 11 10"><path d="M.7 2.2h6.3l2.6 2.3-2.6 2.3H.7z" fill="#c8c8c8"/><path d="M1.8 9.5L7.6 .5" stroke="#2a2b2d" stroke-width="1.8"/><path d="M2 9.3L7.4 .7" stroke="#c8c8c8" stroke-width=".8"/></svg><svg style="left:1007px;top:51.5px" width="11" height="11" viewBox="0 0 11 11"><circle cx="5.5" cy="5.5" r="4.6" fill="#d0d0d0"/><rect x="3.6" y="3" width="1.3" height="5" fill="#2a2b2d"/><rect x="6.1" y="3" width="1.3" height="5" fill="#2a2b2d"/></svg><div class="b" style="left:910px;top:64.5px;width:114px;height:10.5px;background:#292c2e;"></div><div class="b" style="left:910px;top:75px;width:114px;height:12px;background:#292c2e;"></div><div class="b" style="left:910px;top:102px;width:114px;height:11px;background:#292c2e;"></div><div class="b" style="left:910px;top:129.5px;width:114px;height:11.5px;background:#292c2e;"></div><div class="b" style="left:910px;top:156px;width:114px;height:11.300000000000011px;background:#292c2e;"></div><div class="b" style="left:910px;top:167.3px;width:114px;height:12.099999999999994px;background:#292c2e;"></div><div class="b" style="left:910px;top:179.4px;width:114px;height:11.599999999999994px;background:#292c2e;"></div><div class="b" style="left:910px;top:191px;width:114px;height:12px;background:#292c2e;"></div><div class="b" style="left:910px;top:64.5px;width:114px;height:1px;background:#3b3c3e;"></div><div class="b" style="left:910px;top:74.5px;width:114px;height:1px;background:#3b3c3e;"></div><div class="b" style="left:910px;top:75px;width:114px;height:1px;background:#3b3c3e;"></div><div class="b" style="left:910px;top:86.5px;width:114px;height:1px;background:#3b3c3e;"></div><div class="b" style="left:910px;top:102px;width:114px;height:1px;background:#3b3c3e;"></div><div class="b" style="left:910px;top:112.5px;width:114px;height:1px;background:#3b3c3e;"></div><div class="b" style="left:910px;top:129.5px;width:114px;height:1px;background:#3b3c3e;"></div><div class="b" style="left:910px;top:140.5px;width:114px;height:1px;background:#3b3c3e;"></div><div class="b" style="left:910px;top:156px;width:114px;height:1px;background:#3b3c3e;"></div><div class="b" style="left:910px;top:166.8px;width:114px;height:1px;background:#3b3c3e;"></div><div class="b" style="left:910px;top:167.3px;width:114px;height:1px;background:#3b3c3e;"></div><div class="b" style="left:910px;top:178.9px;width:114px;height:1px;background:#3b3c3e;"></div><div class="b" style="left:910px;top:179.4px;width:114px;height:1px;background:#3b3c3e;"></div><div class="b" style="left:910px;top:190.5px;width:114px;height:1px;background:#3b3c3e;"></div><div class="b" style="left:910px;top:191px;width:114px;height:1px;background:#3b3c3e;"></div><div class="b" style="left:910px;top:202.5px;width:114px;height:1px;background:#3b3c3e;"></div><svg style="left:912.5px;top:68.0px" width="5" height="5" viewBox="0 0 5 5"><path d="M1.2 .5v4L3.8 2.5z" fill="#bdbdbd"/></svg><div class="t d" style="left:918.6px;top:68.1px;font-size:6.4px;color:#dadada;">Watch</div><svg style="left:912.5px;top:79.5px" width="5" height="5" viewBox="0 0 5 5"><path d="M.5 1.2h4L2.5 3.8z" fill="#bdbdbd"/></svg><div class="t d" style="left:918.6px;top:79.6px;font-size:6.4px;color:#dadada;">Call Stack</div><svg style="left:912.5px;top:106.3px" width="5" height="5" viewBox="0 0 5 5"><path d="M.5 1.2h4L2.5 3.8z" fill="#bdbdbd"/></svg><div class="t d" style="left:918.6px;top:106.39999999999999px;font-size:6.4px;color:#dadada;">Scope</div><svg style="left:912.5px;top:133.0px" width="5" height="5" viewBox="0 0 5 5"><path d="M.5 1.2h4L2.5 3.8z" fill="#bdbdbd"/></svg><div class="t d" style="left:918.6px;top:133.1px;font-size:6.4px;color:#dadada;">Breakpoints</div><svg style="left:912.5px;top:159.2px" width="5" height="5" viewBox="0 0 5 5"><path d="M1.2 .5v4L3.8 2.5z" fill="#bdbdbd"/></svg><div class="t d" style="left:918.6px;top:159.29999999999998px;font-size:6.4px;color:#dadada;">XHR/fetch Breakpoints</div><svg style="left:912.5px;top:171.2px" width="5" height="5" viewBox="0 0 5 5"><path d="M1.2 .5v4L3.8 2.5z" fill="#bdbdbd"/></svg><div class="t d" style="left:918.6px;top:171.29999999999998px;font-size:6.4px;color:#dadada;">DOM Breakpoints</div><svg style="left:912.5px;top:183.0px" width="5" height="5" viewBox="0 0 5 5"><path d="M1.2 .5v4L3.8 2.5z" fill="#bdbdbd"/></svg><div class="t d" style="left:918.6px;top:183.1px;font-size:6.4px;color:#dadada;">Global Listeners</div><svg style="left:912.5px;top:194.5px" width="5" height="5" viewBox="0 0 5 5"><path d="M1.2 .5v4L3.8 2.5z" fill="#bdbdbd"/></svg><div class="t d" style="left:918.6px;top:194.6px;font-size:6.4px;color:#dadada;">Event Listener Breakpoints</div><div class="b" style="left:910px;top:64px;width:114px;height:1px;background:#3b3c3e;"></div><div class="t d" style="left:951px;top:93.3px;font-size:6.4px;color:#8a8a8a;font-style:italic">Not paused</div><div class="t d" style="left:951px;top:119.6px;font-size:6.4px;color:#8a8a8a;font-style:italic">Not paused</div><div class="t d" style="left:945.7px;top:146.1px;font-size:6.4px;color:#8a8a8a;font-style:italic">No breakpoints</div><div class="b" style="left:468px;top:37px;width:1px;height:502px;background:#0c0c0c;"></div><div class="b" style="left:468px;top:316px;width:556px;height:1px;background:#3b3c3e;"></div><div class="b" style="left:468px;top:317px;width:556px;height:13px;background:#292c2e;"></div><div class="b" style="left:468px;top:329.5px;width:556px;height:1px;background:#3b3c3e;"></div><svg style="left:475px;top:319px" width="4" height="10" viewBox="0 0 4 10"><circle cx="2" cy="1.5" r=".8" fill="#cfcfcf"/><circle cx="2" cy="5" r=".8" fill="#cfcfcf"/><circle cx="2" cy="8.5" r=".8" fill="#cfcfcf"/></svg><div class="b" style="left:483px;top:317px;width:33.5px;height:12.5px;background:#050505;"></div><div class="t d" style="left:488px;top:321.5px;font-size:6.4px;color:#f0f0f0;">Console</div><svg style="left:1013px;top:320px" width="8" height="8" viewBox="0 0 8 8"><path d="M1 1L7 7M7 1L1 7" stroke="#d5d5d5" stroke-width="1"/></svg><div class="b" style="left:468px;top:330.5px;width:556px;height:14px;background:#292c2e;"></div><div class="b" style="left:468px;top:345px;width:556px;height:1px;background:#3b3c3e;"></div><svg style="left:472px;top:333px" width="10" height="9" viewBox="0 0 10 9"><rect x=".5" y=".5" width="9" height="8" fill="none" stroke="#a5a5a5" stroke-width=".9"/><path d="M2.8 .5v8" stroke="#a5a5a5" stroke-width=".9"/><path d="M4.5 2.5L7.5 4.5 4.5 6.5z" fill="#b5b5b5"/></svg><svg style="left:487px;top:333px" width="9" height="9" viewBox="0 0 9 9"><circle cx="4.5" cy="4.5" r="3.6" fill="none" stroke="#b5b5b5" stroke-width="1.1"/><path d="M2 2L7 7" stroke="#b5b5b5" stroke-width="1.1"/></svg><div class="b" style="left:502px;top:332px;width:1px;height:11px;background:#3b3c3e;"></div><div class="t d" style="left:507px;top:336.2px;font-size:6.4px;color:#bdbdbd;">top</div><svg style="left:571px;top:336px" width="5" height="5" viewBox="0 0 5 5"><path d="M0 1h5L2.5 4z" fill="#c5c5c5"/></svg><div class="b" style="left:580px;top:332px;width:1px;height:11px;background:#3b3c3e;"></div><svg style="left:584px;top:334px" width="11" height="7" viewBox="0 0 11 7"><path d="M.5 3.5Q5.5-2 10.5 3.5Q5.5 9 .5 3.5z" fill="none" stroke="#c5c5c5" stroke-width="1"/><circle cx="5.5" cy="3.5" r="1.5" fill="#c5c5c5"/></svg><div class="b" style="left:599px;top:332px;width:1px;height:11px;background:#3b3c3e;"></div><div class="b" style="left:603px;top:332.5px;width:116px;height:11.5px;background:#1f1f1f;border:1px solid #3e3e3e"></div><div class="t d" style="left:606px;top:336.2px;font-size:6.4px;color:#767676;">Filter</div><div class="t d" style="left:723px;top:336.2px;font-size:6.4px;color:#bdbdbd;">Default levels</div><svg style="left:763px;top:336px" width="5" height="5" viewBox="0 0 5 5"><path d="M0 1h5L2.5 4z" fill="#c5c5c5"/></svg><div class="b" style="left:977px;top:332px;width:1px;height:11px;background:#3b3c3e;"></div><div class="t d" style="left:981px;top:336.2px;font-size:6.4px;color:#8c8c8c;">3 hidden</div><svg style="left:1012px;top:334px" width="8.2" height="8.2" viewBox="0 0 10 10"><circle cx="5.00" cy="1.90" r="1.35" fill="#cfcfcf"/><circle cx="7.68" cy="3.45" r="1.35" fill="#cfcfcf"/><circle cx="7.68" cy="6.55" r="1.35" fill="#cfcfcf"/><circle cx="5.00" cy="8.10" r="1.35" fill="#cfcfcf"/><circle cx="2.32" cy="6.55" r="1.35" fill="#cfcfcf"/><circle cx="2.32" cy="3.45" r="1.35" fill="#cfcfcf"/><circle cx="5" cy="5" r="3.1" fill="#cfcfcf"/><circle cx="5" cy="5" r="1.2" fill="#111"/></svg><div class="b" style="left:468px;top:345px;width:550px;height:194px;background:#232323;"></div><div class="b" style="left:1017px;top:345px;width:7px;height:194px;background:#262626;"></div><div class="b" style="left:1017px;top:345px;width:1px;height:194px;background:#2e2e2e;"></div><div class="b" style="left:1017px;top:398px;width:7px;height:141px;background:#333333;"></div><div class="b" style="left:468px;top:538px;width:556px;height:1px;background:#3a3a3a;"></div><div class="m" style="left:481.2px;top:346.05px;font-size:5.900px;color:#dcdcdc">            console<span style="color:#cfcf8e">.log</span>(<span style="color:#f29766">"Selected: None"</span>);</div><div class="m" style="left:481.2px;top:353.45px;font-size:5.900px;color:#dcdcdc">        }</div><div class="m" style="left:481.2px;top:360.85px;font-size:5.900px;color:#dcdcdc">    }</div><div class="m" style="left:481.2px;top:375.35px;font-size:5.900px;color:#dcdcdc">hwv<span style="color:#cfcf8e">.setCallbacks</span>({</div><div class="m" style="left:481.2px;top:383.15px;font-size:5.900px;color:#dcdcdc">    <span style="color:#cfcf8e">selection</span>: mySelectionFunc</div><div class="m" style="left:481.2px;top:390.55px;font-size:5.900px;color:#dcdcdc">});</div><svg style="left:473px;top:401.2px" width="6" height="5" viewBox="0 0 6 5"><path d="M5.5 2.5H1M3 .6L1 2.5 3 4.4" fill="none" stroke="#a0a0a0" stroke-width=".9"/></svg><div class="m" style="left:481.2px;top:400.75px;font-size:5.900px;color:#8a8a8a">undefined</div><div class="b" style="left:468px;top:407.4px;width:550px;height:1px;background:#333435;"></div><div class="b" style="left:468px;top:418px;width:550px;height:1px;background:#333435;"></div><div class="b" style="left:468px;top:428.9px;width:550px;height:1px;background:#333435;"></div><div class="b" style="left:468px;top:439.4px;width:550px;height:1px;background:#333435;"></div><div class="b" style="left:468px;top:520.2px;width:550px;height:1px;background:#333435;"></div><div class="m" style="left:481.2px;top:411.45px;font-size:5.900px;color:#dcdcdc">Selected Node: 10</div><div class="m" style="left:481.2px;top:421.85px;font-size:5.900px;color:#dcdcdc">Face ID: 755</div><div class="m" style="left:481.2px;top:432.55px;font-size:5.900px;color:#dcdcdc">Selected: None</div><div class="t" style="left:966.0px;top:411.00px;font-size:6.4px;color:#c8c8c8;text-decoration:underline">VM249137:6</div><div class="t" style="left:966.0px;top:421.40px;font-size:6.4px;color:#c8c8c8;text-decoration:underline">VM249137:7</div><div class="t" style="left:962.5px;top:432.10px;font-size:6.4px;color:#c8c8c8;text-decoration:underline">VM249137:10</div><svg style="left:473.5px;top:443.5px" width="5" height="5" viewBox="0 0 5 5"><path d="M1.2 .6L3.4 2.5 1.2 4.4" fill="none" stroke="#a0a0a0" stroke-width="1"/></svg><div class="m" style="left:481.2px;top:443.05px;font-size:5.900px;color:#dcdcdc">hwv<span style="color:#cfcf8e">.model</span><span style="color:#cfcf8e">.getNodeEffectiveFaceColor</span>(<span style="color:#a9d39b">10</span>, <span style="color:#a9d39b">755</span>);</div><svg style="left:473px;top:454.1px" width="6" height="5" viewBox="0 0 6 5"><path d="M5.5 2.5H1M3 .6L1 2.5 3 4.4" fill="none" stroke="#a0a0a0" stroke-width=".9"/></svg><svg style="left:481.5px;top:453.5px" width="5" height="5" viewBox="0 0 5 5"><path d="M.5 1.2h4L2.5 3.8z" fill="#bdbdbd"/></svg><div class="m" style="left:487px;top:453.65px;font-size:5.900px;color:#dcdcdc"><i>Promise {&lt;fulfilled&gt;: d}</i></div><div class="b" style="left:577px;top:452.8px;width:6.5px;height:6.5px;background:#7d8fe6;border-radius:1.2px"></div><div class="t" style="left:579.1px;top:453.4px;font-size:5.6px;font-weight:bold;color:#1c2a70">i</div><svg style="left:488.5px;top:462.5px" width="5" height="5" viewBox="0 0 5 5"><path d="M1.2 .5v4L3.8 2.5z" fill="#bdbdbd"/></svg><div class="m" style="left:494px;top:462.65px;font-size:5.900px;color:#dcdcdc"><span style="color:#9a7fd5;opacity:.8">__proto__</span>: Promise</div><div class="m" style="left:494px;top:470.85px;font-size:5.900px;color:#dcdcdc"><i style="color:#c38bd8">[[PromiseState]]</i>: <span style="color:#f29766">"fulfilled"</span></div><svg style="left:487.5px;top:479.5px" width="5" height="5" viewBox="0 0 5 5"><path d="M.5 1.2h4L2.5 3.8z" fill="#bdbdbd"/></svg><div class="m" style="left:494px;top:479.65px;font-size:5.900px;color:#dcdcdc"><i style="color:#c38bd8">[[PromiseResult]]</i>: d</div><div class="m" style="left:499.6px;top:487.85px;font-size:5.900px;color:#dcdcdc"><span style="color:#c38bd8">b</span>: <span style="color:#a09bf0">255</span></div><div class="m" style="left:499.6px;top:496.25px;font-size:5.900px;color:#dcdcdc"><span style="color:#c38bd8">g</span>: <span style="color:#a09bf0">128</span></div><div class="m" style="left:499.6px;top:504.95px;font-size:5.900px;color:#dcdcdc"><span style="color:#c38bd8">r</span>: <span style="color:#a09bf0">0</span></div><svg style="left:494.5px;top:513.3px" width="5" height="5" viewBox="0 0 5 5"><path d="M1.2 .5v4L3.8 2.5z" fill="#bdbdbd"/></svg><div class="m" style="left:500px;top:513.35px;font-size:5.900px;color:#dcdcdc"><span style="color:#9a7fd5;opacity:.8">__proto__</span>: Object</div><svg style="left:473.5px;top:524.0px" width="5" height="5" viewBox="0 0 5 5"><path d="M1.2 .6L3.4 2.5 1.2 4.4" fill="none" stroke="#7a9ae8" stroke-width="1"/></svg><div class="b" style="left:468px;top:37px;width:1px;height:502px;background:#0c0c0c;"></div></div></body></html>
